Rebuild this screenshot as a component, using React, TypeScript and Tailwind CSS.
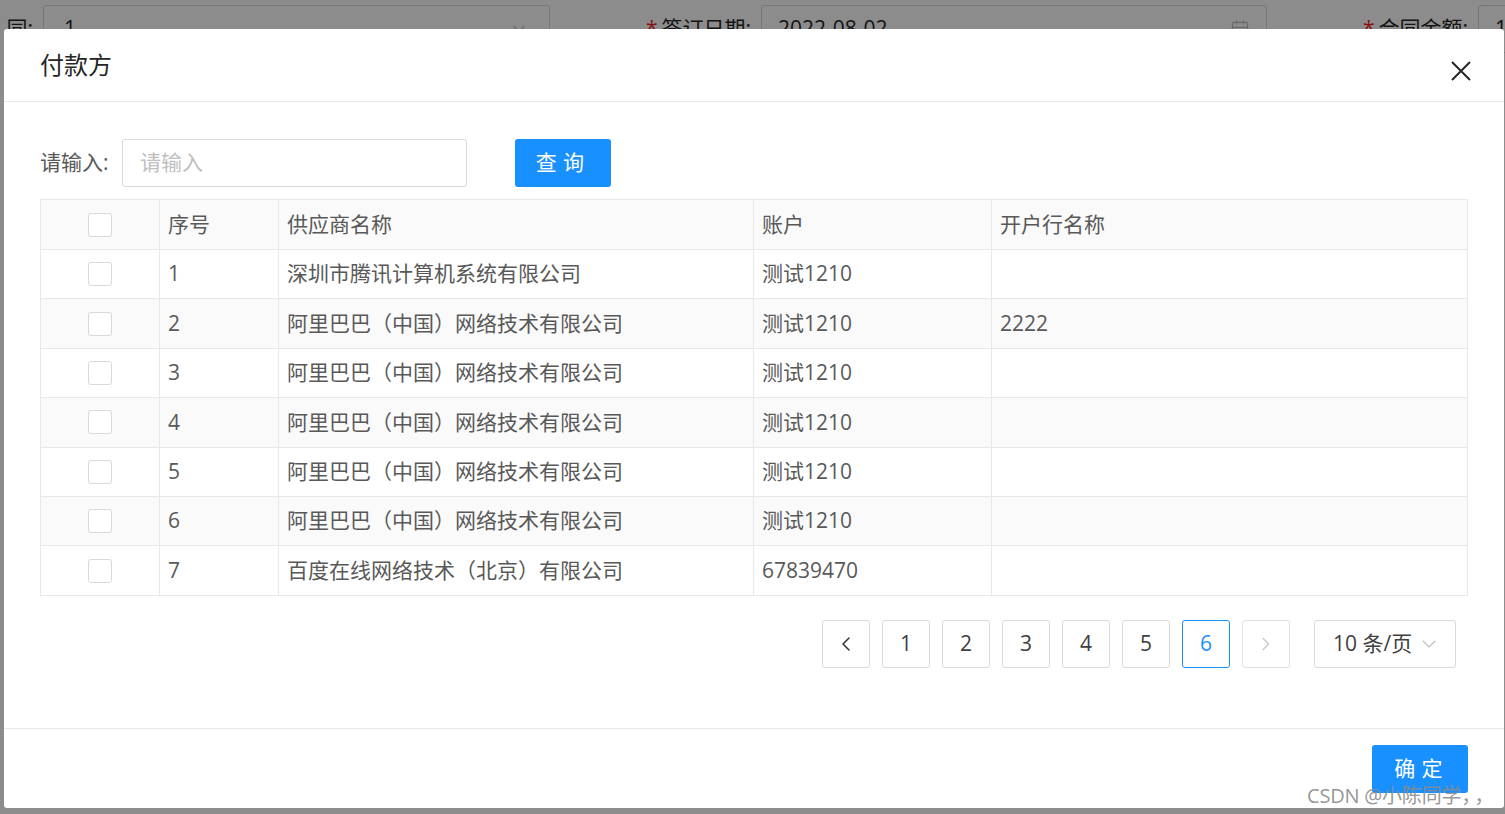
import { ChevronDown, ChevronLeft, ChevronRight, Calendar } from 'lucide-react';

const rows = [
  { no: 1, name: '深圳市腾讯计算机系统有限公司', account: '测试1210', bank: '' },
  { no: 2, name: '阿里巴巴（中国）网络技术有限公司', account: '测试1210', bank: '2222' },
  { no: 3, name: '阿里巴巴（中国）网络技术有限公司', account: '测试1210', bank: '' },
  { no: 4, name: '阿里巴巴（中国）网络技术有限公司', account: '测试1210', bank: '' },
  { no: 5, name: '阿里巴巴（中国）网络技术有限公司', account: '测试1210', bank: '' },
  { no: 6, name: '阿里巴巴（中国）网络技术有限公司', account: '测试1210', bank: '' },
  { no: 7, name: '百度在线网络技术（北京）有限公司', account: '67839470', bank: '' },
];

const font = 'font-["Open_Sans","Noto_Sans_CJK_SC",sans-serif]';

export default function App() {
  return (
    <div className={`relative h-[814px] w-[1505px] overflow-hidden bg-white ${font}`}>
      {/* 背景フォーム(モーダルの下) */}
      <div className="flex items-start pt-[5px] text-[21px] text-[#262626]">
        <Label width="w-[43px]">同</Label>
        <div className="flex h-[48px] w-[507px] shrink-0 items-center justify-between rounded-[3px] border border-[#d9d9d9] px-[20px]">
          <span>1</span>
          <ChevronDown size={20} strokeWidth={1.5} className="text-[#bfbfbf]" />
        </div>
        <Label width="w-[211px]" required>签订日期</Label>
        <div className="flex h-[48px] w-[506px] shrink-0 items-center justify-between rounded-[3px] border border-[#d9d9d9] px-[16px]">
          <span>2022-08-02</span>
          <Calendar size={20} strokeWidth={1.5} className="text-[#bfbfbf]" />
        </div>
        <Label width="w-[211px]" required>合同金额</Label>
        <div className="flex h-[48px] w-[300px] shrink-0 items-center rounded-[3px] border border-[#d9d9d9] px-[16px]">
          <span>1</span>
        </div>
      </div>

      {/* マスク */}
      <div className="absolute inset-0 bg-black/45" />

      {/* モーダル */}
      <div className="absolute left-[4px] top-[29px] flex h-[779px] w-[1500px] flex-col rounded-[3px] bg-white">
        <div className="flex h-[73px] shrink-0 items-center justify-between border-b border-[#e8e8e8] pl-[36px] pr-[33px]">
          <span className="text-[24px] text-[#262626]">付款方</span>
          <svg width="20" height="20" viewBox="0 0 20 20" className="mt-[12px]">
            <path d="M1 1L19 19M19 1L1 19" stroke="#262626" strokeWidth="2" fill="none" />
          </svg>
        </div>

        <div className="flex flex-1 flex-col px-[36px] pt-[37px]">
          <div className="flex h-[48px] items-center text-[21px]">
            <span className="w-[82px] text-[#595959]">请输入:</span>
            <div className="flex h-[48px] w-[345px] items-center rounded-[3px] border border-[#d9d9d9] px-[17px] text-[#bfbfbf]">
              请输入
            </div>
            <button className="ml-[48px] h-[48px] w-[96px] rounded-[3px] bg-[#1890ff] text-[21px] tracking-[0.3em] text-white">
              查询
            </button>
          </div>

          <table className="mt-[12px] w-[1428px] table-fixed border-collapse border border-[#e8e8e8] text-[21px] text-[#595959]">
            <colgroup>
              <col className="w-[119px]" />
              <col className="w-[119px]" />
              <col className="w-[475px]" />
              <col className="w-[238px]" />
              <col />
            </colgroup>
            <thead>
              <tr className="h-[50px] bg-[#fafafa] text-left">
                <Th><Box /></Th>
                <Th>序号</Th>
                <Th>供应商名称</Th>
                <Th>账户</Th>
                <Th>开户行名称</Th>
              </tr>
            </thead>
            <tbody>
              {rows.map((r, i) => (
                <tr key={r.no} className={`h-[49.4px] ${i % 2 === 1 ? 'bg-[#fafafa]' : 'bg-white'}`}>
                  <Td><Box /></Td>
                  <Td>{r.no}</Td>
                  <Td>{r.name}</Td>
                  <Td>{r.account}</Td>
                  <Td>{r.bank}</Td>
                </tr>
              ))}
            </tbody>
          </table>

          <div className="mt-[24px] flex items-center justify-end gap-[12px] pr-[12px] text-[21px] text-[#404040]">
            <PageBtn><ChevronLeft size={24} strokeWidth={1.5} className="text-[#333]" /></PageBtn>
            {[1, 2, 3, 4, 5].map((n) => (
              <PageBtn key={n}>{n}</PageBtn>
            ))}
            <PageBtn active>6</PageBtn>
            <PageBtn disabled><ChevronRight size={22} strokeWidth={1.4} className="text-[#c8c8c8]" /></PageBtn>
            <div className="ml-[12px] flex h-[48px] w-[142px] items-center justify-between rounded-[3px] border border-[#d9d9d9] pl-[18px] pr-[14px]">
              <span>10 条/页</span>
              <ChevronDown size={24} strokeWidth={1.1} className="text-[#bfbfbf]" />
            </div>
          </div>
        </div>

        <div className="flex h-[80px] shrink-0 justify-end border-t border-[#e8e8e8] pr-[36px] pt-[16px]">
          <button className="h-[48px] w-[96px] rounded-[3px] bg-[#1890ff] pl-[3px] text-[21px] tracking-[0.3em] text-white">
            确定
          </button>
        </div>
      </div>

      <span className="absolute left-[1307px] top-[781px] text-[20px] tracking-[-0.01em] text-[#8a8a8a]/90">
        CSDN @小陈同学<span className="tracking-[3px]">，，</span>
      </span>
    </div>
  );
}

function Label({ children, width, required }: { children: React.ReactNode; width: string; required?: boolean }) {
  return (
    <div className={`${width} flex h-[48px] shrink-0 items-center justify-end whitespace-nowrap pr-[10px]`}>
      {required && <span className="mr-[4px] text-[#f5222d]">*</span>}
      {children}:
    </div>
  );
}

function Box() {
  return <div className="mx-auto h-[24px] w-[24px] rounded-[3px] border border-[#d9d9d9] bg-white" />;
}

function Th({ children }: { children: React.ReactNode }) {
  return <th className="border border-[#e8e8e8] px-[8px] font-normal">{children}</th>;
}

function Td({ children }: { children: React.ReactNode }) {
  return <td className="border border-[#e8e8e8] px-[8px] align-middle">{children}</td>;
}

function PageBtn({ children, active, disabled }: { children: React.ReactNode; active?: boolean; disabled?: boolean }) {
  return (
    <div
      className={`flex h-[48px] w-[48px] items-center justify-center rounded-[3px] border ${
        active ? 'border-[#1890ff] text-[#1890ff]' : disabled ? 'border-[#e0e0e0]' : 'border-[#d9d9d9]'
      }`}
    >
      {children}
    </div>
  );
}
